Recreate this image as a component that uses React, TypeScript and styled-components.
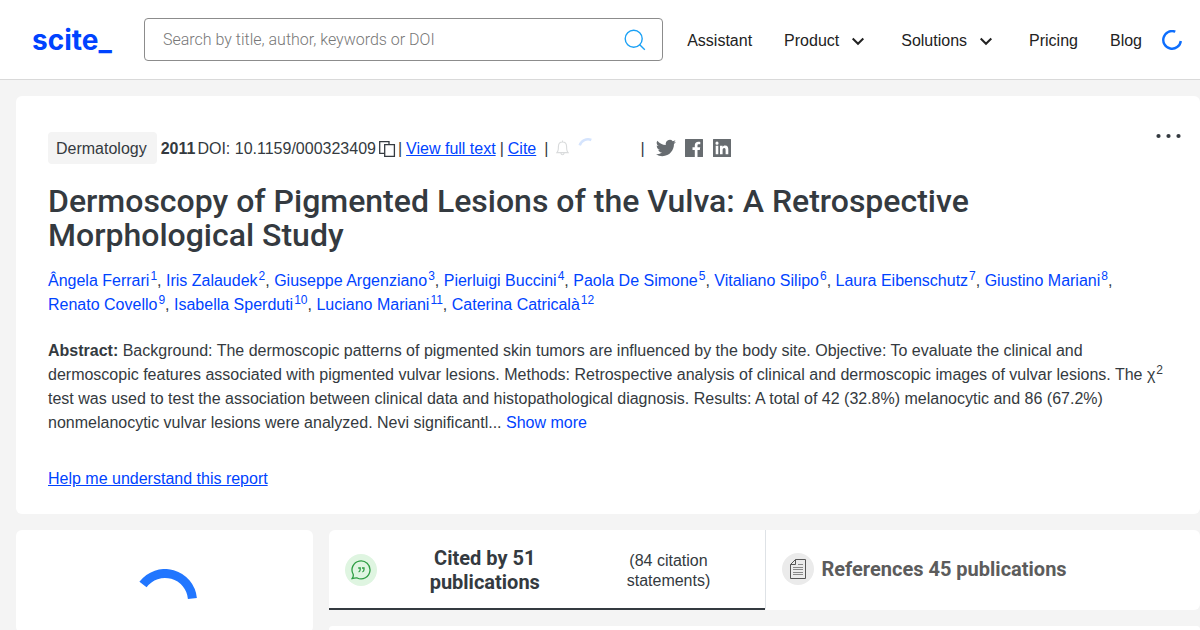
import React from "react";
import styled, { createGlobalStyle } from "styled-components";

const ink = "#343a40";
const link = "#0043ff";

const GlobalStyle = createGlobalStyle`
  *, *::before, *::after { box-sizing: border-box; }
  body {
    margin: 0;
    background: #f4f4f4;
    color: ${ink};
    font: 16px/24px "Liberation Sans", Arial, sans-serif;
  }
  h1, h2, p { margin: 0; }
  button { font: inherit; color: inherit; background: none; border: 0; padding: 0; cursor: pointer; }
`;

const Page = styled.div`
  min-height: 100vh;
  display: flex;
  flex-direction: column;
`;

const Header = styled.header`
  display: flex;
  align-items: center;
  height: 80px;
  padding: 0 18px 0 32px;
  background: #fff;
  border-bottom: 1px solid #d9d9d9;
`;

const Logo = styled.a`
  width: 112px;
  flex: none;
  color: ${link};
  font: 700 28px/32px Inter, sans-serif;
  text-decoration: none;
`;

const SearchForm = styled.form`
  flex: 1;
  min-width: 200px;
  display: flex;
  align-items: center;
  height: 43px;
  padding: 0 16px 0 18px;
  border: 1px solid #8c8c8c;
  border-radius: 4px;
`;

const SearchInput = styled.input`
  flex: 1;
  min-width: 0;
  border: 0;
  outline: 0;
  padding: 0;
  background: none;
  color: ${ink};
  font: 300 16px/24px Roboto, sans-serif;
  &::placeholder { color: #777; opacity: 1; }
`;

const IconButton = styled.button`
  display: flex;
`;

const Nav = styled.nav`
  flex: none;
  display: flex;
  align-items: center;
  gap: 32px;
  margin: 0 20px 0 24px;
  padding-top: 2px;
`;

const NavLink = styled.a`
  color: #222;
  text-decoration: none;
`;

const NavMenu = styled.button`
  display: flex;
  align-items: center;
  gap: 8px;
  color: #222;
`;

const Main = styled.main`
  flex: 1;
  display: flex;
  flex-direction: column;
  gap: 16px;
  padding: 16px 0 0 16px;
`;

const Card = styled.section`
  background: #fff;
  border-radius: 6px;
`;

const Paper = styled(Card)`
  padding: 36px 32px 23px;
`;

const MetaBar = styled.div`
  display: flex;
  justify-content: space-between;
  margin-bottom: 20px;
`;

const Meta = styled.div`
  display: flex;
  align-items: center;
  gap: 4px;
  height: 32px;
  white-space: nowrap;
`;

const Journal = styled.span`
  padding: 5px 10px 3px 8px;
  border-radius: 4px;
  background: #f4f4f4;
`;

const Details = styled.div`
  display: flex;
  align-items: center;
  gap: 4px;
  padding-top: 2px;
`;

const Doi = styled.span`
  display: flex;
  align-items: center;
  gap: 2px;
`;

const TextLink = styled.a`
  color: ${link};
`;

const Alerts = styled.span`
  display: flex;
  align-items: center;
  gap: 9px;
  width: 80px;
  margin: 0 0 2px 4px;
`;

const Divider = styled.span`
  margin-left: 4px;
`;

const Social = styled.span`
  display: flex;
  gap: 8px;
  margin: 0 0 2px 7px;
  color: #676c70;
`;

const SocialLink = styled.a`
  display: flex;
  color: inherit;
`;

const MoreButton = styled.button`
  display: flex;
  align-self: flex-start;
  margin-right: -13px;
`;

const Title = styled.h1`
  font-family: Roboto, sans-serif;
  font-size: 32px;
  line-height: 34px;
  font-weight: 500;
`;

const Authors = styled.p`
  margin: 17px 0 22px;
`;

const Author = styled.a`
  color: ${link};
  text-decoration: none;
`;

const Sup = styled.sup`
  font-size: 12px;
  line-height: 0;
  margin-left: 1px;
`;

const ShowMore = styled.button`
  color: ${link};
`;

const Help = styled.p`
  margin-top: 32px;
`;

const Columns = styled.div`
  flex: 1;
  display: grid;
  grid-template-columns: 297px 1fr;
  gap: 16px;
`;

const Sidebar = styled(Card)`
  display: flex;
  justify-content: center;
  align-items: flex-start;
  padding: 39px 0 0;
`;

const Results = styled.div`
  display: flex;
  flex-direction: column;
  gap: 16px;
`;

const ResultList = styled(Card)`
  flex: 1;
`;

const Tabs = styled(Card)`
  display: grid;
  grid-template-columns: 1fr 1fr;
  height: 80px;
  border-bottom-left-radius: 0;
  overflow: hidden;
`;

const Tab = styled.button<{ $active?: boolean }>`
  display: flex;
  align-items: center;
  gap: 8px;
  padding: ${(p) => (p.$active ? "2px" : "0")} 16px 0;
  color: ${(p) => (p.$active ? ink : "#5c5c5c")};
  border-bottom: 2px solid ${(p) => (p.$active ? ink : "transparent")};
  & + & { border-left: 1px solid #dee2e6; }
`;

const TabTitle = styled.span<{ $grow?: boolean }>`
  flex: ${(p) => (p.$grow ? 1 : "none")};
  padding-left: ${(p) => (p.$grow ? "4px" : "0")};
  font-family: Roboto, sans-serif;
  font-size: 20px;
  line-height: 24px;
  font-weight: 700;
`;

const TabNote = styled.span`
  width: 160px;
  padding: 2px 32px 0;
  line-height: 20px;
`;

const Badge = styled.span<{ $tone: string }>`
  flex: none;
  display: flex;
  align-items: center;
  justify-content: center;
  width: 32px;
  height: 32px;
  border-radius: 50%;
  background: ${(p) => p.$tone};
`;

const Chevron = () => (
  <svg width="22" height="16" viewBox="0 0 22 16" fill="none" stroke="currentColor" strokeWidth="2" aria-hidden>
    <path d="M5.700 5.500l5.300 5.300 5.300-5.300" />
  </svg>
);

function Arc({ size, d, width, color }: { size: number; d: string; width: number; color: string }) {
  return (
    <svg width={size} height={size} viewBox={`0 0 ${size} ${size}`} fill="none" stroke={color} strokeWidth={width} role="img" aria-label="Loading">
      <path d={d} />
    </svg>
  );
}

const authors: string[] = [
  "Ângela Ferrari",
  "Iris Zalaudek",
  "Giuseppe Argenziano",
  "Pierluigi Buccini",
  "Paola De Simone",
  "Vitaliano Silipo",
  "Laura Eibenschutz",
  "Giustino Mariani",
  "Renato Covello",
  "Isabella Sperduti",
  "Luciano Mariani",
  "Caterina Catricalà",
];

export default function App() {
  return (
    <Page>
      <GlobalStyle />
      <Header>
        <Logo href="#">scite_</Logo>
        <SearchForm role="search" onSubmit={(e) => e.preventDefault()}>
          <SearchInput aria-label="Search" placeholder="Search by title, author, keywords or DOI" />
          <IconButton aria-label="Search">
            <svg width="22" height="22" viewBox="0 0 22 22" fill="none" stroke="#1ba1f5" strokeWidth="1.4">
              <circle cx="9.7" cy="9.7" r="8.5" />
              <path d="M15.500 15.500l5.300 5.300" />
            </svg>
          </IconButton>
        </SearchForm>
        <Nav>
          <NavLink href="#">Assistant</NavLink>
          <NavMenu>Product <Chevron /></NavMenu>
          <NavMenu>Solutions <Chevron /></NavMenu>
          <NavLink href="#">Pricing</NavLink>
          <NavLink href="#">Blog</NavLink>
        </Nav>
        <Arc size={20} width={2.4} color="#0d6efd" d="M13.300 1.700A8.800 8.800 0 1 0 18.800 11" />
      </Header>
      <Main>
        <Paper>
          <MetaBar>
            <Meta>
              <Journal>Dermatology</Journal>
              <Details>
                <Doi>
                  <strong>2011</strong>
                  <span>DOI: 10.1159/000323409</span>
                  <IconButton aria-label="Copy DOI">
                    <svg width="18" height="18" viewBox="0 0 18 18" fill="none" stroke={ink} strokeWidth="1.300">
                      <path d="M6.500 13.400H1.700V1.600H11V4" />
                      <path d="M6.700 4.600h9.700v11.800H6.700z" />
                    </svg>
                  </IconButton>
                  <span>|</span>
                </Doi>
                <TextLink href="#">View full text</TextLink>
                <span>|</span>
                <TextLink href="#">Cite</TextLink>
                <Divider>|</Divider>
                <Alerts>
                  <svg width="13" height="18" viewBox="0 0 14 18" fill="none" stroke="#d9dbdc" strokeWidth="1.200" aria-hidden>
                    <path d="M1 14c1.400-1.200 1.600-2.500 1.600-6.500C2.600 4.500 4.300 2.500 7 2.500s4.400 2 4.400 5c0 4 .2 5.300 1.600 6.500zM7 .8v1.700M5.300 14.500c.3 2.400 3.100 2.400 3.400 0" />
                  </svg>
                  <Arc size={20} width={2.6} color="#d5e4fd" d="M1.700 7.400A8.700 8.700 0 0 1 13.300 2" />
                </Alerts>
                <span>|</span>
                <Social>
                  <SocialLink href="#" aria-label="Twitter">
                    <svg width="20" height="20" viewBox="0 0 24 24" fill="currentColor">
                      <path d="M23.950 4.570a10 10 0 0 1-2.820.770 4.960 4.960 0 0 0 2.160-2.720c-.950.550-2 .950-3.130 1.180a4.920 4.920 0 0 0-8.380 4.480C7.690 8.090 4.070 6.130 1.640 3.160a4.920 4.920 0 0 0 1.520 6.570 4.900 4.900 0 0 1-2.230-.610v.060a4.920 4.920 0 0 0 3.950 4.830 5 5 0 0 1-2.210.080 4.940 4.940 0 0 0 4.600 3.420A9.870 9.870 0 0 1 0 19.540a14 14 0 0 0 7.550 2.210c9.050 0 14-7.500 14-13.980 0-.210 0-.420-.020-.630a9.940 9.940 0 0 0 2.420-2.570z" />
                    </svg>
                  </SocialLink>
                  <SocialLink href="#" aria-label="Facebook">
                    <svg width="20" height="20" viewBox="0 0 20 20" fill="currentColor">
                      <path d="M1.500 1h17a.5.5 0 0 1 .5.5v17a.5.5 0 0 1-.5.5h-5v-7h2.300l.4-2.700h-2.700V7.600c0-.8.300-1.300 1.400-1.300h1.400V3.900c-.300 0-1.100-.1-2-.1-2.100 0-3.500 1.300-3.500 3.500v2H8.500V12h2.300v7H1.500a.5.5 0 0 1-.5-.5v-17a.5.5 0 0 1 .5-.5z" />
                    </svg>
                  </SocialLink>
                  <SocialLink href="#" aria-label="LinkedIn">
                    <svg width="20" height="20" viewBox="0 0 20 20" fill="currentColor" fillRule="evenodd">
                      <path d="M1.500 1h17a.5.5 0 0 1 .5.5v17a.5.5 0 0 1-.5.5h-17a.5.5 0 0 1-.5-.5v-17a.5.5 0 0 1 .5-.5zM3.700 7.800v8.500h2.600V7.800zM5 3.600a1.500 1.500 0 1 0 0 3.100 1.500 1.500 0 0 0 0-3.100zM8 7.800v8.500h2.600v-4.200c0-1.100.300-2.200 1.600-2.200s1.400 1.200 1.400 2.300v4.100h2.700v-4.700c0-2.300-.500-4-3.200-4-1.300 0-2.100.7-2.500 1.400V7.800z" />
                    </svg>
                  </SocialLink>
                </Social>
              </Details>
            </Meta>
            <MoreButton aria-label="More options">
              <svg width="25" height="8" viewBox="0 0 25 8" fill={ink}>
                <circle cx="2.500" cy="4" r="2.1" /><circle cx="12.500" cy="4" r="2.1" /><circle cx="22.500" cy="4" r="2.1" />
              </svg>
            </MoreButton>
          </MetaBar>
          <Title>
            Dermoscopy of Pigmented Lesions of the Vulva: A Retrospective<br />Morphological Study
          </Title>
          <Authors>
            {authors.map((name, i) => (
              <React.Fragment key={name}>
                <Author href="#">{name}<Sup>{i + 1}</Sup></Author>
                {i < authors.length - 1 && ", "}
              </React.Fragment>
            ))}
          </Authors>
          <p>
            <strong>Abstract:</strong> Background: The dermoscopic patterns of pigmented skin tumors are influenced by
            the body site. Objective: To evaluate the clinical and dermoscopic features associated with pigmented
            vulvar lesions. Methods: Retrospective analysis of clinical and dermoscopic images of vulvar lesions. The
            χ<Sup>2</Sup> test was used to test the association between clinical data and histopathological diagnosis.
            Results: A total of 42 (32.8%) melanocytic and 86 (67.2%) nonmelanocytic vulvar lesions were analyzed. Nevi
            significantl... <ShowMore>Show more</ShowMore>
          </p>
          <Help><TextLink href="#">Help me understand this report</TextLink></Help>
        </Paper>
        <Columns>
          <Sidebar as="aside">
            <Arc size={64} width={9} color="#2176ff" d="M10 15.500A27.500 27.500 0 0 1 59.400 29.500" />
          </Sidebar>
          <Results>
            <Tabs as="div">
              <Tab $active>
                <Badge $tone="#dff5e1">
                  <svg width="20" height="20" viewBox="0 0 20 20" fill="none" stroke="#2f9e44" strokeWidth="1.300">
                    <path d="M1.200 18.500c1-1.300 1.300-2.700 1-4.200A9 9 0 1 1 6.200 18c-1.500-.4-3.300.5-5 .5z" />
                    <path d="M7.200 8h2v1.500c0 1.200-.5 2-1.600 2.500M11 8h2v1.500c0 1.200-.5 2-1.600 2.500" />
                  </svg>
                </Badge>
                <TabTitle $grow>Cited by 51<br />publications</TabTitle>
                <TabNote>(84 citation statements)</TabNote>
              </Tab>
              <Tab>
                <Badge $tone="#ebebeb">
                  <svg width="16" height="20" viewBox="0 0 16 20" fill="none" stroke="#555" strokeWidth="1">
                    <path d="M5.500.5h10v19H.5v-14zM5.500.5v5h-5" />
                    <path stroke="#888" d="M8 5.500h5M3 8.500h10M3 10.500h10M3 13.500h10M3 15.500h10" />
                  </svg>
                </Badge>
                <TabTitle>References 45 publications</TabTitle>
              </Tab>
            </Tabs>
            <ResultList />
          </Results>
        </Columns>
      </Main>
    </Page>
  );
}
